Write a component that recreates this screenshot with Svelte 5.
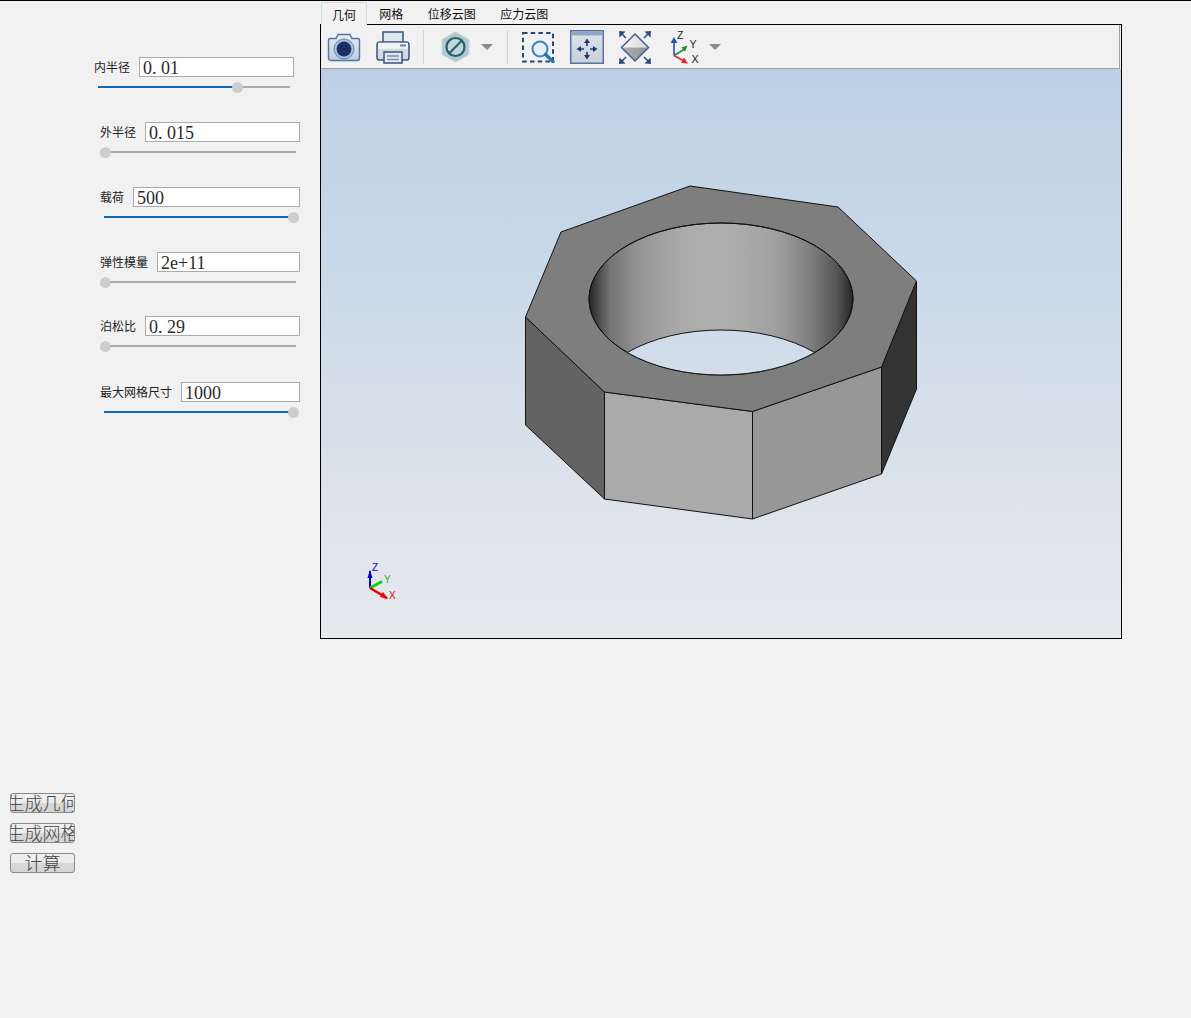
<script>
	const params = [
		{ label: '内半径', value: '0. 01', pos: 0.734, left: 94, gap: 0 },
		{ label: '外半径', value: '0. 015', pos: 0, left: 100, gap: 30 },
		{ label: '载荷', value: '500', pos: 1, left: 100, gap: 30 },
		{ label: '弹性模量', value: '2e+11', pos: 0, left: 100, gap: 30 },
		{ label: '泊松比', value: '0. 29', pos: 0, left: 100, gap: 29 },
		{ label: '最大网格尺寸', value: '1000', pos: 1, left: 100, gap: 31 }
	];
	const tabs = ['几何', '网格', '位移云图', '应力云图'];
	const actions = ['生成几何', '生成网格', '计算'];

	let active = $state(0);

	// handle centre travels 5px..193px inside the 196px slider box
	const handleX = (pos) => 5 + pos * 188;
</script>

<div class="page">
	<div class="top">
		<aside class="sidebar">
			{#each params as p}
				<div class="field" style="margin-left: {p.left}px; margin-top: {p.gap}px">
					<div class="field-row">
						<span class="field-label">{p.label}</span>
						<input class="field-input" type="text" value={p.value} />
					</div>
					<div class="slider">
						<div class="groove"></div>
						<div class="fill" style="width: {handleX(p.pos) - 4}px"></div>
						<div class="handle" style="left: {handleX(p.pos) - 5}px"></div>
					</div>
				</div>
			{/each}
		</aside>

		<main class="main">
			<div class="tabs">
				{#each tabs as t, i}
					<button class="tab" class:selected={active === i} onclick={() => (active = i)}>{t}</button>
				{/each}
			</div>

			<div class="viewer">
				<div class="toolbar">
					<!-- camera -->
					<svg class="tool" width="34" height="30" viewBox="0 0 34 30">
						<defs>
							<linearGradient id="camBody" x1="0" y1="0" x2="0" y2="1">
								<stop offset="0" stop-color="#e6ecf4" />
								<stop offset="1" stop-color="#bccde2" />
							</linearGradient>
						</defs>
						<path d="M1.5 8.5 Q1.5 6.5 3.5 6.5 H9 L11 2.5 H23 L25 6.5 H30.5 Q32.5 6.5 32.5 8.5 V26 Q32.5 28.5 30 28.5 H4 Q1.5 28.5 1.5 26 Z" fill="url(#camBody)" stroke="#4f76a4" stroke-width="1.4" />
						<circle cx="17" cy="17" r="10" fill="#a9bdd6" stroke="#6d8eb4" />
						<circle cx="17" cy="17" r="7.4" fill="#1a2f66" />
					</svg>

					<!-- printer -->
					<svg class="tool m15" width="34" height="34" viewBox="0 0 34 34">
						<path d="M7 12 V2 H27 V12" fill="#dfe5ee" stroke="#37547f" stroke-width="1.5" />
						<path d="M3 30 Q1 30 1 27 V15 Q1 12 4 12 H30 Q33 12 33 15 V27 Q33 30 31 30 Z" fill="#d2d9e3" stroke="#37547f" stroke-width="1.5" />
						<rect x="2" y="12.8" width="30" height="6" fill="#f2f4f7" />
						<rect x="24" y="14.5" width="6" height="2" fill="#6e7f99" />
						<rect x="8" y="22" width="18" height="11" fill="#e4e8ee" stroke="#37547f" stroke-width="1.5" />
						<path d="M11 26 H23 M11 29.5 H23" stroke="#7f90aa" stroke-width="1.4" />
					</svg>

					<span class="sep m13"></span>

					<!-- hex section -->
					<svg class="tool m17" width="29" height="32" viewBox="0 0 29 32">
						<path d="M14.5 1 L28 8.5 V23.5 L14.5 31 L1 23.5 V8.5 Z" fill="#b1c8cc" stroke="#c9d8db" />
						<circle cx="14.5" cy="16" r="9" fill="#c3d5d8" stroke="#24606e" stroke-width="2.2" />
						<path d="M8.5 22 L20.5 10" stroke="#24606e" stroke-width="2.2" />
					</svg>
					<svg class="tool m11" width="12" height="6" viewBox="0 0 12 6"><path d="M0 0 H12 L6 6 Z" fill="#8a8a8a" /></svg>

					<span class="sep m14"></span>

					<!-- zoom window -->
					<svg class="tool m14" width="33" height="32" viewBox="0 0 33 32">
						<rect x="1" y="2" width="30" height="28.5" fill="none" stroke="#2c4670" stroke-width="2" stroke-dasharray="4.5 3.2" />
						<circle cx="18" cy="18" r="7.5" fill="#e8eff6" stroke="#3d84b8" stroke-width="2" />
						<path d="M23.5 23.5 L31 30.5" stroke="#1f77b4" stroke-width="3.4" stroke-linecap="round" />
					</svg>

					<!-- pan -->
					<svg class="tool m15" width="34" height="34" viewBox="0 0 34 34">
						<defs>
							<linearGradient id="panBody" x1="0" y1="0" x2="0" y2="1">
								<stop offset="0" stop-color="#dde3ec" />
								<stop offset="1" stop-color="#c8d0dc" />
							</linearGradient>
						</defs>
						<rect x="0.75" y="0.75" width="32.5" height="32.5" fill="url(#panBody)" stroke="#56729b" stroke-width="1.5" />
						<rect x="1.5" y="1.5" width="31" height="4" fill="#8fa5c4" />
						<path d="M17 12 V16 M17 22 V26 M10 19 H14 M20 19 H24" stroke="#1f3a68" stroke-width="1.6" />
						<path d="M17 8.5 L20 13 H14 Z M17 29.5 L20 25 H14 Z M6.5 19 L11 16 V22 Z M27.5 19 L23 16 V22 Z" fill="#1f3a68" />
					</svg>

					<!-- fit all -->
					<svg class="tool m14" width="34" height="34" viewBox="0 0 34 34">
						<defs>
							<linearGradient id="fitTop" x1="0" y1="0" x2="1" y2="0">
								<stop offset="0" stop-color="#fafafa" />
								<stop offset="1" stop-color="#d4d4d4" />
							</linearGradient>
							<linearGradient id="fitBottom" x1="0" y1="0" x2="1" y2="0">
								<stop offset="0" stop-color="#b4b4b4" />
								<stop offset="1" stop-color="#8e8e8e" />
							</linearGradient>
						</defs>
						<path d="M17 4 L30.5 17.5 H3.5 Z" fill="url(#fitTop)" />
						<path d="M3.5 17.5 L17 31 L30.5 17.5 Z" fill="url(#fitBottom)" />
						<path d="M17 4 L30.5 17.5 L17 31 L3.5 17.5 Z" fill="none" stroke="#46618c" stroke-width="1.5" />
						<path d="M1 1 L7.5 1.5 L1.5 7.5 Z M33 1 L26.5 1.5 L32.5 7.5 Z M1 34 L7.5 33.5 L1.5 27.5 Z M33 34 L26.5 33.5 L32.5 27.5 Z" fill="#2f4b7c" />
						<path d="M3 3 L8 8 M31 3 L26 8 M3 32 L8 27 M31 32 L26 27" stroke="#2f4b7c" stroke-width="1.5" />
					</svg>

					<!-- axis orientation -->
					<svg class="tool m17" width="32" height="34" viewBox="0 0 32 34">
						<path d="M5 25.5 V10" stroke="#2257b8" stroke-width="1.6" />
						<path d="M5 7 L8.5 13 H1.5 Z" fill="#2257b8" />
						<path d="M5 25.5 L15 19.5" stroke="#1f8a3c" stroke-width="1.6" />
						<path d="M18.5 15.5 L16 21.5 L12.5 17.5 Z" fill="#1f8a3c" />
						<path d="M5 25.5 L15 31" stroke="#e02b2b" stroke-width="1.6" />
						<path d="M19 33.5 L12 33 L15 27.5 Z" fill="#e02b2b" />
						<text x="8" y="9" class="axis-label">Z</text>
						<text x="20.5" y="18" class="axis-label">Y</text>
						<text x="22.5" y="33" class="axis-label">X</text>
					</svg>
					<svg class="tool m8" width="12" height="6" viewBox="0 0 12 6"><path d="M0 0 H12 L6 6 Z" fill="#8a8a8a" /></svg>
				</div>

				<div class="canvas">
					<svg class="scene" viewBox="321 69 800 569" preserveAspectRatio="none">
						<defs>
							<linearGradient id="sky" gradientUnits="userSpaceOnUse" x1="0" y1="69" x2="0" y2="638">
								<stop offset="0" stop-color="#bbd0e6" />
								<stop offset="1" stop-color="#e7e9ed" />
							</linearGradient>
							<linearGradient id="wall" gradientUnits="userSpaceOnUse" x1="589" y1="0" x2="853" y2="0">
								<stop offset="0" stop-color="#262626" />
								<stop offset="0.08" stop-color="#747474" />
								<stop offset="0.2" stop-color="#979797" />
								<stop offset="0.34" stop-color="#a9a9a9" />
								<stop offset="0.49" stop-color="#b0b0b0" />
								<stop offset="0.7" stop-color="#a2a2a2" />
								<stop offset="0.84" stop-color="#7f7f7f" />
								<stop offset="0.94" stop-color="#545454" />
								<stop offset="1" stop-color="#262626" />
							</linearGradient>
							<clipPath id="bore"><ellipse cx="721" cy="299" rx="132" ry="76" /></clipPath>
						</defs>
						<rect x="321" y="69" width="800" height="569" fill="url(#sky)" />

						<g stroke="#111" stroke-width="1" stroke-linejoin="round">
							<polygon points="525.5,317 604.5,392 604.5,499 525.5,425" fill="#636363" />
							<polygon points="604.5,392 752.5,411.5 752.5,519 604.5,499" fill="#aaaaaa" />
							<polygon points="752.5,411.5 881.5,367 881.5,474 752.5,519" fill="#979797" />
							<polygon points="881.5,367 916.5,281 916.5,389 881.5,474" fill="#333333" />
							<polygon points="561,232 690,186 838,207 916.5,281 881.5,367 752.5,411.5 604.5,392 525.5,317" fill="#7e7e7e" />
							<ellipse cx="721" cy="299" rx="132" ry="76" fill="url(#wall)" />
						</g>
						<ellipse cx="721" cy="406" rx="132" ry="76" fill="url(#sky)" stroke="#111" clip-path="url(#bore)" />
						<ellipse cx="721" cy="299" rx="132" ry="76" fill="none" stroke="#111" />

						<!-- orientation triad -->
						<path d="M370 588 V571" stroke="#0000e0" stroke-width="2" />
						<path d="M370 570 L372.5 578 H367.5 Z" fill="#0000e0" />
						<path d="M370 588 L382 581.5" stroke="#10d010" stroke-width="2.6" />
						<path d="M370 588 L387 598" stroke="#f00000" stroke-width="2.6" />
						<path d="M388 599 L380 597 L383 592 Z" fill="#f00000" />
						<text x="372" y="571" class="triad" fill="#0000e0">Z</text>
						<text x="384" y="583" class="triad" fill="#10c010">Y</text>
						<text x="389" y="599" class="triad" fill="#f00000">X</text>
					</svg>
				</div>
			</div>
		</main>
	</div>

	<div class="actions">
		{#each actions as a}
			<button class="action"><span>{a}</span></button>
		{/each}
	</div>
</div>

<style>
	:global(body) {
		background: #f1f1f1;
	}

	.page {
		width: 1191px;
		height: 1018px;
		box-sizing: border-box;
		border-top: 1px solid #000;
		background: #f1f1f1;
		font-family: 'Noto Sans CJK SC', 'Liberation Sans', sans-serif;
		overflow: hidden;
	}

	.top {
		display: flex;
	}

	.sidebar {
		width: 320px;
		padding-top: 56px;
		box-sizing: border-box;
	}

	.field {
		width: 200px;
	}

	.field-row {
		display: flex;
		align-items: center;
		gap: 9px;
		height: 20px;
	}

	.field-label {
		font-size: 12px;
		line-height: 16px;
		color: #222;
		white-space: nowrap;
	}

	.field-input {
		flex: 1;
		min-width: 0;
		height: 20px;
		box-sizing: border-box;
		border: 1px solid #ababab;
		background: #fff;
		padding: 3px 0 0 3px;
		margin: 0;
		font-family: 'Liberation Serif', serif;
		font-size: 18px;
		color: #2b2b2b;
		outline: none;
		border-radius: 0;
	}

	.slider {
		position: relative;
		width: 196px;
		height: 10px;
		margin-top: 5px;
	}

	.groove,
	.fill {
		position: absolute;
		left: 4px;
		top: 4px;
		height: 2px;
	}

	.groove {
		right: 0;
		background: #ababab;
	}

	.fill {
		background: #0f67b6;
	}

	.handle {
		position: absolute;
		top: -0.5px;
		width: 11px;
		height: 11px;
		border-radius: 50%;
		background: #cdcdcd;
	}

	.main {
		width: 802px;
	}

	.tabs {
		display: flex;
		height: 23px;
		padding-left: 1px;
	}

	.tab {
		position: relative;
		height: 23px;
		padding: 2px 12.25px 0;
		margin: 0;
		border: none;
		background: none;
		font: inherit;
		font-size: 12px;
		color: #111;
	}

	.tab.selected {
		z-index: 1;
		margin-top: 1px;
		padding: 0 10px;
		border: 1px solid #d9d9d9;
		border-bottom: none;
		background: #f1f1f1;
	}

	.viewer {
		height: 615px;
		box-sizing: border-box;
		border: 1px solid #000;
		display: flex;
		flex-direction: column;
		background: #f1f1f1;
	}

	.toolbar {
		display: flex;
		align-items: center;
		flex: none;
		height: 44px;
		box-sizing: border-box;
		padding-left: 6px;
		border-bottom: 1px solid #a0a0a0;
		border-right: 1px solid #a0a0a0;
		margin-right: 1px;
	}

	.tool {
		flex: none;
	}

	.sep {
		flex: none;
		width: 1px;
		height: 34px;
		background: #d4d4d4;
	}

	.m8 { margin-left: 8px; }
	.m11 { margin-left: 11px; }
	.m13 { margin-left: 13px; }
	.m14 { margin-left: 14px; }
	.m15 { margin-left: 15px; }
	.m17 { margin-left: 17px; }

	.axis-label {
		font-family: 'Liberation Sans', sans-serif;
		font-size: 10.5px;
		fill: #222;
	}

	.canvas {
		flex: 1;
		min-height: 0;
	}

	.scene {
		display: block;
		width: 100%;
		height: 100%;
	}

	.triad {
		font-family: 'Liberation Sans', sans-serif;
		font-size: 10px;
	}

	.actions {
		display: flex;
		flex-direction: column;
		align-items: flex-start;
		gap: 10px;
		padding: 154px 0 0 10px;
	}

	.action {
		display: flex;
		justify-content: center;
		align-items: center;
		width: 65px;
		height: 20px;
		box-sizing: border-box;
		padding: 0 0 2px;
		border: 1px solid #8a8a8a;
		border-radius: 3px;
		background: linear-gradient(#efefef 0, #ececec 50%, #d8d8d8 50%, #d4d4d4 100%);
		overflow: hidden;
		font-family: 'Noto Sans CJK SC', sans-serif;
		font-size: 18px;
		line-height: 18px;
		font-weight: 300;
		color: #444;
		white-space: nowrap;
	}

	.action span {
		flex: none;
	}
</style>
